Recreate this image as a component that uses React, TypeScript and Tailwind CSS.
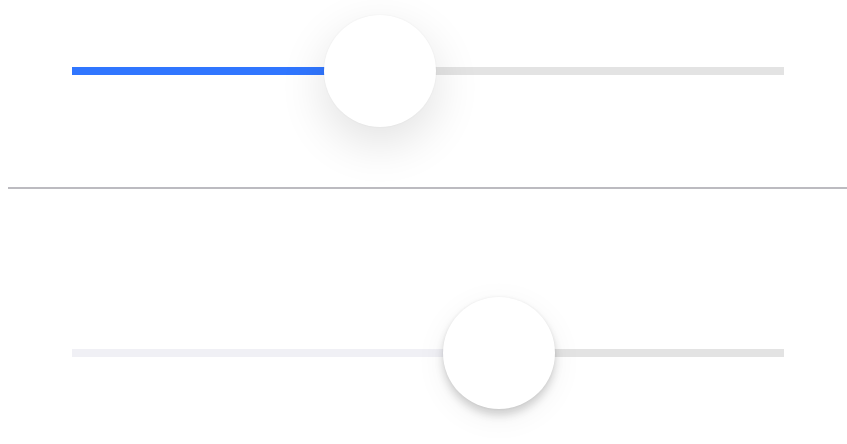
// Range sliders - two thumb styles

import React from 'react';

const TRACK_W = 712;
const THUMB = 112;

type SliderProps = {
  value: number;
  fillClass: string;
  thumbClass: string;
};

function Slider({ value, fillClass, thumbClass }: SliderProps) {
  const pos = value * TRACK_W;

  return (
    <div className="relative h-2 w-[712px] bg-[#e3e3e3]">
      {/* Filled part */}
      <div className={`absolute left-0 top-0 h-full ${fillClass}`} style={{ width: pos }} />
      {/* Thumb */}
      <div
        className={`absolute top-[-52px] h-[112px] w-[112px] rounded-full bg-white ${thumbClass}`}
        style={{ left: pos - THUMB / 2 }}
      />
    </div>
  );
}

export default function App() {
  return (
    <div className="flex h-[444px] w-[847px] flex-col overflow-hidden bg-white">
      {/* Active slider */}
      <div className="flex pl-[72px] pt-[67px]">
        <Slider
          value={308 / TRACK_W}
          fillClass="bg-[#3076ff]"
          thumbClass="shadow-[0_0_2px_rgba(0,0,0,0.06),0_16px_48px_rgba(0,0,0,0.12)]"
        />
      </div>

      <div className="ml-[8px] mt-[112px] h-[2px] bg-[#bcbbc0]" />

      {/* Muted slider */}
      <div className="flex pl-[72px] pt-[160px]">
        <Slider
          value={427 / TRACK_W}
          fillClass="bg-[#f0f0f5]"
          thumbClass="shadow-[0_0_3px_rgba(0,0,0,0.06),0_6px_8px_rgba(0,0,0,0.16),0_8px_32px_rgba(0,0,0,0.06)]"
        />
      </div>
    </div>
  );
}
